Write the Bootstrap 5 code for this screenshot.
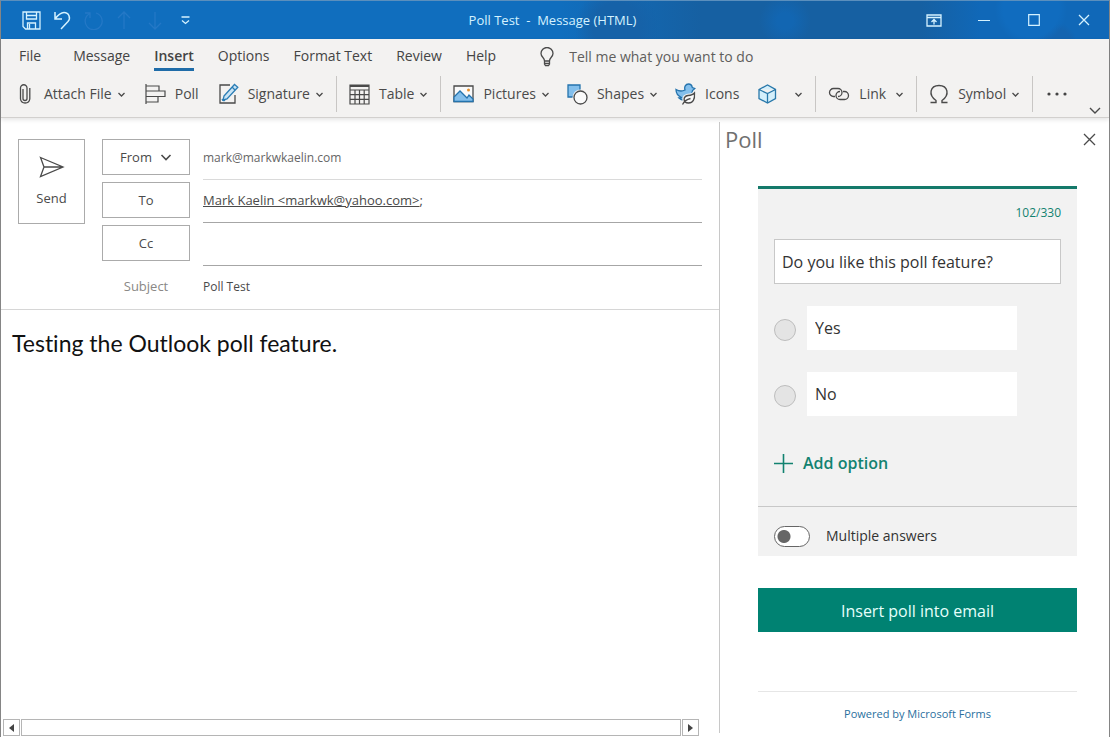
<!DOCTYPE html>
<html lang="en">
<head>
<meta charset="utf-8">
<meta name="viewport" content="width=device-width, initial-scale=1">
<title>Poll Test - Message (HTML)</title>
<link href="https://cdn.jsdelivr.net/npm/bootstrap@5.3.0/dist/css/bootstrap.min.css" rel="stylesheet">
<style>
  body { font-family: "Open Sans", "Noto Sans", sans-serif; font-size: 14px; line-height: 20px; color: #4a4a4a; background: #fff; }
  button, input, textarea { font-family: inherit; color: inherit; }
  button { background: none; border: 0; padding: 0; }
  svg { display: block; flex: none; fill: none; stroke: currentColor; }
  .solid { fill: #444; stroke: none; }
  .cube { stroke: #2878aa; }
  .app-window { border: 1px solid #858585; border-top-color: #5b8fbd; border-bottom: 0; }

  .title-bar { height: 38px; color: #d5f2ff; font-size: 13px;
    background:
      radial-gradient(circle at 616px 26px, #1662a8 24px, transparent 42px),
      radial-gradient(circle at 784px 20px, #1266b2 8px, transparent 26px),
      radial-gradient(circle at 1030px 8px, #106cbf 28px, transparent 36px),
      radial-gradient(circle at 1056px 42px, #1464b0 14px, transparent 20px),
      linear-gradient(90deg, #106ebe 0 560px, #1660a2 700px 920px, #1068b8 980px); }
  .quick-tools { gap: 11px; padding-left: 20px; }
  .dimmed { color: #2478c6; }
  .win-btn { width: 50px; height: 38px; }

  .ribbon { background: #f3f2f1; border-bottom: 1px solid #d2d0ce; box-shadow: 0 2px 4px #0000001a; z-index: 1; }
  .tab-row { gap: 24px; height: 35px; padding-left: 18px; font-size: 14px; }
  .tab-row a { color: #444; text-decoration: none; line-height: 24px; padding-top: 2px; border-bottom: 3px solid transparent; }
  .tab-row a:first-child { margin-right: 8px; }
  .tab-row a.active { font-weight: 600; border-color: #1f6ca8; }
  .tell-group { gap: 15px; margin-left: 20px; }
  .tell-me { border: 0; background: none; width: 240px; padding: 0; }
  .tell-me::placeholder { color: #605e5c; opacity: 1; }
  .command-row { height: 43px; padding: 0 16px 3px; gap: 16px; }
  .command-set { gap: 17px; }
  .command-set.first { gap: 19px; }
  .command { gap: 9px; white-space: nowrap; }
  .caret { margin-left: -4px; }
  .divider-line { width: 1px; height: 36px; background: #c8c6c4; margin: 0 -4px; }

  .mail-pane { min-width: 0; }
  .mail-head { padding: 19px 17px 0; gap: 17px; border-bottom: 1px solid #d6d6d6; }
  .box-btn { border: 1px solid #ababab; font-size: 13px; }
  .send-btn { width: 67px; height: 85px; margin-top: 2px; gap: 10px; }
  .field-line { height: 43px; gap: 13px; font-size: 12px; }
  .field-line .box-btn, .field-line .field-name { width: 88px; height: 36px; margin-bottom: 3px; font-size: 13px; }
  .field-name { color: #8a8886; line-height: 36px; text-align: center; }
  .field-value { height: 43px; border: 0; border-bottom: 1px solid #a6a6a6; background: none; padding: 0 0 2px; min-width: 0; }
  .field-value.soft { border-color: #dadada; color: #666; }
  .field-value.bare { border-color: transparent; }
  .recipients { font-size: 13px; }
  .mail-body { border: 0; resize: none; outline: 0; padding: 17px 11px; font-family: Lato, Carlito, sans-serif; font-size: 23px; line-height: 32px; font-variant-ligatures: none; color: #111; }
  .scroll-strip { height: 17px; margin: 0 20px 1px 2px; gap: 1px; }
  .scroll-strip > * { border: 1px solid #b5b5b5; }
  .scroll-strip button { width: 17px; }

  .poll-pane { width: 390px; margin: 4px 0; border-left: 1px solid #c8c8c8; }
  .poll-head { padding: 0 13px 0 5px; }
  .poll-title { font-size: 22px; line-height: 34px; font-weight: 400; color: #707070; }
  .poll-inner { margin: 30px 32px 0 38px; font-size: 16px; color: #333; }
  .poll-card { background: #f2f2f2; border-top: 3px solid #14796a; }
  .poll-main { padding: 14px 16px 30px; border-bottom: 1px solid #c8c8c8; }
  .counter, .green-link { color: #128270; }
  .counter { font-size: 12px; }
  .question-box { height: 45px; border: 1px solid #c8c8c8; padding: 0 7px; }
  .answer-box { width: 210px; height: 44px; border: 0; padding: 0 8px; background: #fff; }
  .answer-line { gap: 11px; margin-top: 22px; }
  .answer-line .form-check-input { width: 22px; height: 22px; margin: 4px 0 0; background-color: #e4e4e4; border: 1px solid #bdbdbd; }
  .green-link { gap: 10px; margin-top: 34px; line-height: 26px; font-weight: 600; }
  .multi-line { height: 49px; padding: 8px 16px 0; gap: 16px; font-size: 14px; }
  .form-check-input.toggle { width: 36px; height: 21px; margin: 2px 0 0; border: 1px solid #666; border-radius: 11px; background: #fff radial-gradient(circle at 9px 50%, #666 6px, transparent 7px) no-repeat; }
  .form-check-input.toggle:checked { background: #128270 radial-gradient(circle at 25px 50%, #fff 6px, transparent 7px) no-repeat; }
  .insert-btn { height: 44px; margin-top: 32px; padding-top: 2px; background: #008272; color: #e6fffb; }
  .powered { margin-top: 59px; border-top: 1px solid #e6e6e6; padding-top: 12px; font-size: 11px; }
  .powered a { color: #2a6f9e; text-decoration: none; }
</style>
</head>
<body>
<div class="app-window d-flex flex-column min-vh-100">
  <header class="title-bar d-flex align-items-center">
    <div class="quick-tools d-flex align-items-center flex-fill">
      <button aria-label="Save"><svg width="20" height="20" viewBox="0 0 20 20" stroke-width="1.3"><path d="M2 2h17v17H4.500l-2.500-2.500zM5.500 2v7h10V2M6.500 19v-6h8v6M8.500 14v5M5.500 5.500h10"/></svg></button>
      <button aria-label="Undo"><svg width="20" height="20" viewBox="0 0 20 20" stroke-width="1.500"><path d="M3 2v7h7M3 9c3-4 6-6.500 9-6.500 5 0 7 5.500 4 9L9 19"/></svg></button>
      <button class="dimmed" aria-label="Redo"><svg width="20" height="20" viewBox="0 0 20 20" stroke-width="1.300"><path d="M2 3h5v5M7 3.500A8.500 8.500 0 1 0 13 3"/></svg></button>
      <button class="dimmed" aria-label="Previous item"><svg width="20" height="20" viewBox="0 0 20 20" stroke-width="1.300"><path d="M10 19V2M4 8l6-6 6 6"/></svg></button>
      <button class="dimmed" aria-label="Next item"><svg width="20" height="20" viewBox="0 0 20 20" stroke-width="1.300"><path d="M10 2v17M4 13l6 6 6-6"/></svg></button>
      <button aria-label="Customize toolbar"><svg width="20" height="20" viewBox="0 0 20 20" stroke-width="1.300"><path d="M5.500 7h8M6 10.500l3.500 3 3.500-3"/></svg></button>
    </div>
    <div class="text-center text-nowrap">Poll Test&nbsp; -&nbsp; Message (HTML)</div>
    <div class="d-flex flex-fill justify-content-end">
      <button class="win-btn d-flex align-items-center justify-content-center" aria-label="Ribbon display options"><svg width="16" height="13" viewBox="0 0 16 13" stroke-width="1.300"><path d="M1 1h14v11H1zM1 3.500h14M8 10.500V5.500M5.500 8L8 5.500 10.500 8"/></svg></button>
      <button class="win-btn d-flex align-items-center justify-content-center" aria-label="Minimize"><svg width="12" height="12" viewBox="0 0 12 12"><path d="M0 6.500h12"/></svg></button>
      <button class="win-btn d-flex align-items-center justify-content-center" aria-label="Maximize"><svg width="12" height="12" viewBox="0 0 12 12" stroke-width="1.200"><path d="M.7.700h10.600v10.600H.7z"/></svg></button>
      <button class="win-btn d-flex align-items-center justify-content-center" aria-label="Close"><svg width="12" height="12" viewBox="0 0 12 12" stroke-width="1.300"><path d="M1 1l10 10M11 1L1 11"/></svg></button>
    </div>
  </header>

  <div class="ribbon position-relative">
    <nav class="tab-row d-flex align-items-center" aria-label="Ribbon tabs">
      <a href="#">File</a><a href="#">Message</a><a href="#" class="active" aria-current="page">Insert</a><a href="#">Options</a><a href="#">Format Text</a><a href="#">Review</a><a href="#">Help</a>
      <div class="tell-group d-flex align-items-center">
        <label for="tell" aria-label="Search commands"><svg width="14" height="20" viewBox="0 0 14 20" stroke-width="1.300"><path d="M4.500 14c0-3.500-3.500-4-3.500-7.500a6 6 0 0 1 12 0c0 3.500-3.500 4-3.500 7.500zM4.500 14v3l1 1.500h3l1-1.500v-3M4.500 16.300h5"/></svg></label>
        <input id="tell" class="tell-me" type="text" placeholder="Tell me what you want to do">
      </div>
    </nav>
    <div class="command-row d-flex align-items-center">
      <div class="command-set first d-flex">
        <button class="command d-flex align-items-center"><svg width="18" height="22" viewBox="0 0 18 22" stroke-width="1.300"><path d="M6 6v9.500a2 2 0 0 0 4 0V5a3.200 3.200 0 0 0-6.500 0v11a4.700 4.700 0 0 0 9.300 0V5"/></svg>Attach File<svg class="caret" width="9" height="9" viewBox="0 0 9 9" stroke-width="1.300"><path d="M1.500 3l3 3 3-3"/></svg></button>
        <button class="command d-flex align-items-center"><svg width="21" height="20" viewBox="0 0 21 20" stroke-width="1.200"><path d="M1 0v20M1 2h13v5H1M1 7h19v5.500H1M1 12.500h12v5.500H1"/></svg>Poll</button>
        <button class="command d-flex align-items-center"><svg width="21" height="22" viewBox="0 0 21 22" stroke-width="1.300"><path d="M12 2H2v18h15v-8"/><path stroke="#2b7db5" fill="#c9e4f5" d="M6 13L16.500 1.500l3.300 2.700L9 16l-4 1z"/><path stroke="#2b7db5" d="M4 16c1 2 2 2 3 1M14 4l3 3"/></svg>Signature<svg class="caret" width="9" height="9" viewBox="0 0 9 9" stroke-width="1.300"><path d="M1.500 3l3 3 3-3"/></svg></button>
      </div>
      <div class="divider-line"></div>
      <div class="command-set d-flex">
        <button class="command d-flex align-items-center"><svg width="21" height="21" viewBox="0 0 21 21" stroke-width="1.200"><path d="M1 1h19v19H1zM1 6h19M1 10.700h19M1 15.300h19M6 6v14M10.500 6v14M15.200 6v14"/><path stroke-width="2" d="M1 2h19"/></svg>Table<svg class="caret" width="9" height="9" viewBox="0 0 9 9" stroke-width="1.300"><path d="M1.500 3l3 3 3-3"/></svg></button>
      </div>
      <div class="divider-line"></div>
      <div class="command-set d-flex">
        <button class="command d-flex align-items-center"><svg width="21" height="18" viewBox="0 0 21 18" stroke-width="1.300"><path fill="#fafafa" d="M1 1h19v15.500H1z"/><path fill="#83bfec" stroke="#2473ad" d="M1 12l6-6 7 7 2-3 4 4v2.500H1z"/><circle cx="15.500" cy="5" r="1.500" fill="#e8912d" stroke="none"/></svg>Pictures<svg class="caret" width="9" height="9" viewBox="0 0 9 9" stroke-width="1.300"><path d="M1.500 3l3 3 3-3"/></svg></button>
        <button class="command d-flex align-items-center"><svg width="21" height="21" viewBox="0 0 21 21" stroke-width="1.300"><path fill="#83bfec" stroke="#2473ad" d="M1 1h12v12H1z"/><circle cx="13.500" cy="13.500" r="8" fill="#f3f2f1" stroke="none"/><circle cx="13.500" cy="13.500" r="6.500" fill="#fafafa"/></svg>Shapes<svg class="caret" width="9" height="9" viewBox="0 0 9 9" stroke-width="1.300"><path d="M1.500 3l3 3 3-3"/></svg></button>
        <button class="command d-flex align-items-center"><svg width="21" height="22" viewBox="0 0 21 22" stroke-width="1.300"><path fill="#83bfec" stroke="#2473ad" d="M1 6.500c2.500 1.500 6 2 9 .5-1-3 .5-6 3.500-6 2.500 0 3.500 1.500 3.800 3.500l2.700 1-2.500 2C17 14 13 17 9 17c-2.500 0-4-1-5-2 1 0 2 0 2.500-.5C3 13 1 10 1 6.500z"/><path fill="#f3f2f1" stroke="#f3f2f1" stroke-width="3.500" d="M19.500 10c.5 6.500-1.500 10-6 10-5.500 0-6-6.500-.5-7.500 3-.3 5-.5 6.500-2.500z"/><path fill="#fafafa" d="M19.500 10c.5 6.500-1.500 10-6 10-5.500 0-6-6.500-.5-7.500 3-.3 5-.5 6.500-2.500zM7.500 21.500c1.500-3 4-5 8-6"/></svg>Icons</button>
        <button class="command d-flex align-items-center" aria-label="3D models"><svg class="cube" width="21" height="20" viewBox="0 0 21 20" stroke-width="1.300"><path fill="#d4effb" d="M3 5.500l8.500-4.500 8 4.500v9l-8 4.500L3 14.500zM3 5.500l8.500 4 8-4M11.500 9.500V19"/></svg><svg class="ms-2" width="9" height="9" viewBox="0 0 9 9" stroke-width="1.300"><path d="M1.500 3l3 3 3-3"/></svg></button>
      </div>
      <div class="divider-line"></div>
      <div class="command-set d-flex">
        <button class="command d-flex align-items-center"><svg width="22" height="14" viewBox="0 0 22 14" stroke-width="1.300"><path d="M7 9.500H5.500a4 4 0 0 1 0-8H10a4 4 0 0 1 0 8M15 4.500h1.500a4 4 0 0 1 0 8H12a4 4 0 0 1 0-8"/></svg>Link<svg width="9" height="9" viewBox="0 0 9 9" stroke-width="1.300"><path d="M1.500 3l3 3 3-3"/></svg></button>
      </div>
      <div class="divider-line"></div>
      <div class="command-set d-flex">
        <button class="command d-flex align-items-center"><svg width="20" height="20" viewBox="0 0 20 20" stroke-width="1.400"><path d="M1.500 18.500h5.500v-2C-1 11 1 1.500 10 1.500S21 11 13 16.500v2h5.500"/></svg>Symbol<svg class="caret" width="9" height="9" viewBox="0 0 9 9" stroke-width="1.300"><path d="M1.500 3l3 3 3-3"/></svg></button>
      </div>
      <div class="divider-line"></div>
      <button aria-label="More commands"><svg class="solid" width="22" height="6" viewBox="0 0 22 6"><circle cx="4" cy="3" r="1.600"/><circle cx="12" cy="3" r="1.600"/><circle cx="20" cy="3" r="1.600"/></svg></button>
    </div>
    <button class="position-absolute bottom-0 end-0 me-2" aria-label="Collapse ribbon"><svg width="12" height="13" viewBox="0 0 12 13" stroke-width="1.400"><path d="M1 4l5 5 5-5"/></svg></button>
  </div>

  <main class="d-flex flex-fill">
    <section class="mail-pane d-flex flex-column flex-fill">
      <div class="mail-head d-flex align-items-start">
        <button class="send-btn box-btn d-flex flex-column align-items-center justify-content-center"><svg width="26" height="22" viewBox="0 0 26 22" stroke-width="1.300"><path d="M1.500 1.500L24 11 1.500 20.500 5 11zM5 11h19"/></svg>Send</button>
        <div class="flex-fill">
          <div class="field-line d-flex align-items-center"><button class="box-btn d-flex align-items-center justify-content-center gap-2">From <svg width="12" height="10" viewBox="0 0 12 10" stroke-width="1.600"><path d="M1.500 3L6 7.500 10.500 3"/></svg></button><input class="field-value soft flex-fill" type="text" aria-label="From" value="mark@markwkaelin.com"></div>
          <div class="field-line d-flex align-items-center"><button class="box-btn">To</button><div class="field-value recipients flex-fill d-flex align-items-center"><a class="text-reset" href="#">Mark Kaelin &lt;markwk@yahoo.com&gt;</a>;</div></div>
          <div class="field-line d-flex align-items-center"><button class="box-btn">Cc</button><input class="field-value flex-fill" type="text" aria-label="Cc"></div>
          <div class="field-line d-flex align-items-center"><label class="field-name" for="subject">Subject</label><input id="subject" class="field-value bare flex-fill" type="text" value="Poll Test"></div>
        </div>
      </div>
      <textarea class="mail-body flex-fill" aria-label="Message body">Testing the Outlook poll feature.</textarea>
      <div class="scroll-strip d-flex">
        <button class="d-flex align-items-center justify-content-center" aria-label="Scroll left"><svg class="solid" width="5" height="8" viewBox="0 0 5 8"><path d="M5 0v8L0 4z"/></svg></button>
        <div class="flex-fill"></div>
        <button class="d-flex align-items-center justify-content-center" aria-label="Scroll right"><svg class="solid" width="5" height="8" viewBox="0 0 5 8"><path d="M0 0v8l5-4z"/></svg></button>
      </div>
    </section>

    <aside class="poll-pane flex-shrink-0">
      <div class="poll-head d-flex justify-content-between align-items-center">
        <h1 class="poll-title m-0">Poll</h1>
        <button aria-label="Close pane"><svg width="13" height="13" viewBox="0 0 13 13" stroke-width="1.300"><path d="M1 1l11 11M12 1L1 12"/></svg></button>
      </div>
      <div class="poll-inner">
        <div class="poll-card">
          <div class="poll-main">
            <div class="counter text-end">102/330</div>
            <input class="question-box w-100 mt-3" type="text" aria-label="Question" value="Do you like this poll feature?">
            <div class="answer-line d-flex align-items-center"><input class="form-check-input" type="radio" name="answer" aria-label="Option 1"><input class="answer-box" type="text" aria-label="Option 1 text" value="Yes"></div>
            <div class="answer-line d-flex align-items-center"><input class="form-check-input" type="radio" name="answer" aria-label="Option 2"><input class="answer-box" type="text" aria-label="Option 2 text" value="No"></div>
            <button class="green-link d-flex align-items-center"><svg width="19" height="19" viewBox="0 0 19 19" stroke-width="1.600"><path d="M9.500 0v19M0 9.500h19"/></svg>Add option</button>
          </div>
          <div class="multi-line d-flex align-items-center"><input id="multi" class="form-check-input toggle" type="checkbox" role="switch"><label for="multi">Multiple answers</label></div>
        </div>
        <button class="insert-btn w-100">Insert poll into email</button>
        <div class="powered text-center"><a href="#">Powered by Microsoft Forms</a></div>
      </div>
    </aside>
  </main>
</div>
<script src="https://cdn.jsdelivr.net/npm/bootstrap@5.3.0/dist/js/bootstrap.bundle.min.js"></script>
</body>
</html>
